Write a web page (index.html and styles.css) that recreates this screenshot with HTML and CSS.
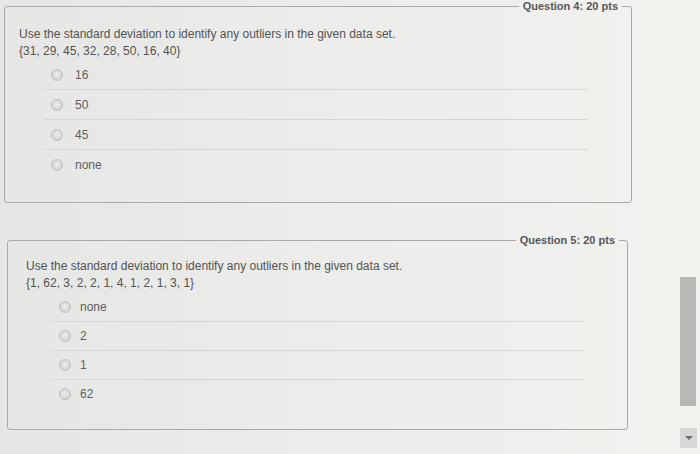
FILE: index.html
```html
<!DOCTYPE html>
<html lang="en">
<head>
<meta charset="utf-8">
<title>Quiz</title>
<link rel="stylesheet" href="styles.css">
</head>
<body>
<div class="page">
  <main class="content">
    <fieldset class="question q4">
      <legend class="pts">Question 4: 20 pts</legend>
      <p class="prompt">Use the standard deviation to identify any outliers in the given data set.<br>{31, 29, 45, 32, 28, 50, 16, 40}</p>
      <ul class="answers">
        <li class="answer"><span class="radio"></span><span class="label">16</span></li>
        <li class="answer"><span class="radio"></span><span class="label">50</span></li>
        <li class="answer"><span class="radio"></span><span class="label">45</span></li>
        <li class="answer"><span class="radio"></span><span class="label">none</span></li>
      </ul>
    </fieldset>
    <fieldset class="question q5">
      <legend class="pts">Question 5: 20 pts</legend>
      <p class="prompt">Use the standard deviation to identify any outliers in the given data set.<br>{1, 62, 3, 2, 2, 1, 4, 1, 2, 1, 3, 1}</p>
      <ul class="answers">
        <li class="answer"><span class="radio"></span><span class="label">none</span></li>
        <li class="answer"><span class="radio"></span><span class="label">2</span></li>
        <li class="answer"><span class="radio"></span><span class="label">1</span></li>
        <li class="answer"><span class="radio"></span><span class="label">62</span></li>
      </ul>
    </fieldset>
  </main>
  <aside class="scrollbar">
    <div class="thumb"></div>
    <div class="arrow-down"><span class="tri"></span></div>
  </aside>
</div>
</body>
</html>
```
FILE: styles.css
```css
html, body {
  margin: 0;
  padding: 0;
}
body {
  width: 700px;
  height: 454px;
  overflow: hidden;
  background: linear-gradient(90deg, #e6e6e4 0%, #ececea 45%, #f1f3ef 100%);
  font-family: "Liberation Sans", Arial, sans-serif;
  color: #575757;
}
.page {
  display: flex;
  height: 454px;
}
.content {
  width: 678px;
}
.question {
  margin: 0;
  border: 1px solid #a9a9a7;
  border-radius: 3px;
  min-inline-size: 0;
  box-sizing: border-box;
}
.pts {
  margin-left: auto;
  padding: 0 4px;
  font-size: 11px;
  line-height: 13px;
  font-weight: bold;
  color: #575757;
}
.q4 {
  margin-left: 4px;
  width: 628px;
  height: 203px;
  padding: 13px 0 0 14px;
}
.q4 .pts {
  margin-right: 9px;
}
.q5 {
  margin-top: 31px;
  margin-left: 7px;
  width: 621px;
  height: 196px;
  padding: 11px 0 0 18px;
}
.q5 .pts {
  margin-right: 8px;
}
.prompt {
  margin: 0;
  font-size: 12px;
  line-height: 17px;
  color: #535353;
}
.answers {
  list-style: none;
  margin: 0 0 0 25px;
  padding: 0;
  width: 544px;
}
.q5 .answers {
  margin: 1px 0 0 24px;
  width: 535px;
}
.answer {
  display: flex;
  align-items: center;
  height: 29px;
  border-bottom: 1px solid #d6d7d4;
  font-size: 12px;
  color: #5e5e5e;
}
.q5 .answer {
  height: 28px;
}
.answer:last-child {
  border-bottom: none;
}
.radio {
  width: 12px;
  height: 12px;
  border-radius: 50%;
  box-sizing: border-box;
  border: 1px solid #c0c0be;
  background: radial-gradient(circle at 50% 45%, #eeeeec 0%, #d9d9d7 55%, #c4c4c2 100%);
  margin-left: 7px;
  margin-right: 12px;
  flex: none;
}
.q5 .radio {
  margin-left: 9px;
  margin-right: 9px;
}
.scrollbar {
  width: 22px;
  display: flex;
  flex-direction: column;
}
.thumb {
  margin-top: 277px;
  margin-left: 2px;
  width: 16px;
  height: 129px;
  background: #b7b9b6;
}
.arrow-down {
  margin-top: 22px;
  margin-left: 2px;
  width: 17px;
  height: 20px;
  background: #d7d8d5;
  display: flex;
  align-items: center;
  justify-content: center;
}
.tri {
  width: 0;
  height: 0;
  border-left: 4px solid transparent;
  border-right: 4px solid transparent;
  border-top: 4px solid #6e6e6e;
}
```
